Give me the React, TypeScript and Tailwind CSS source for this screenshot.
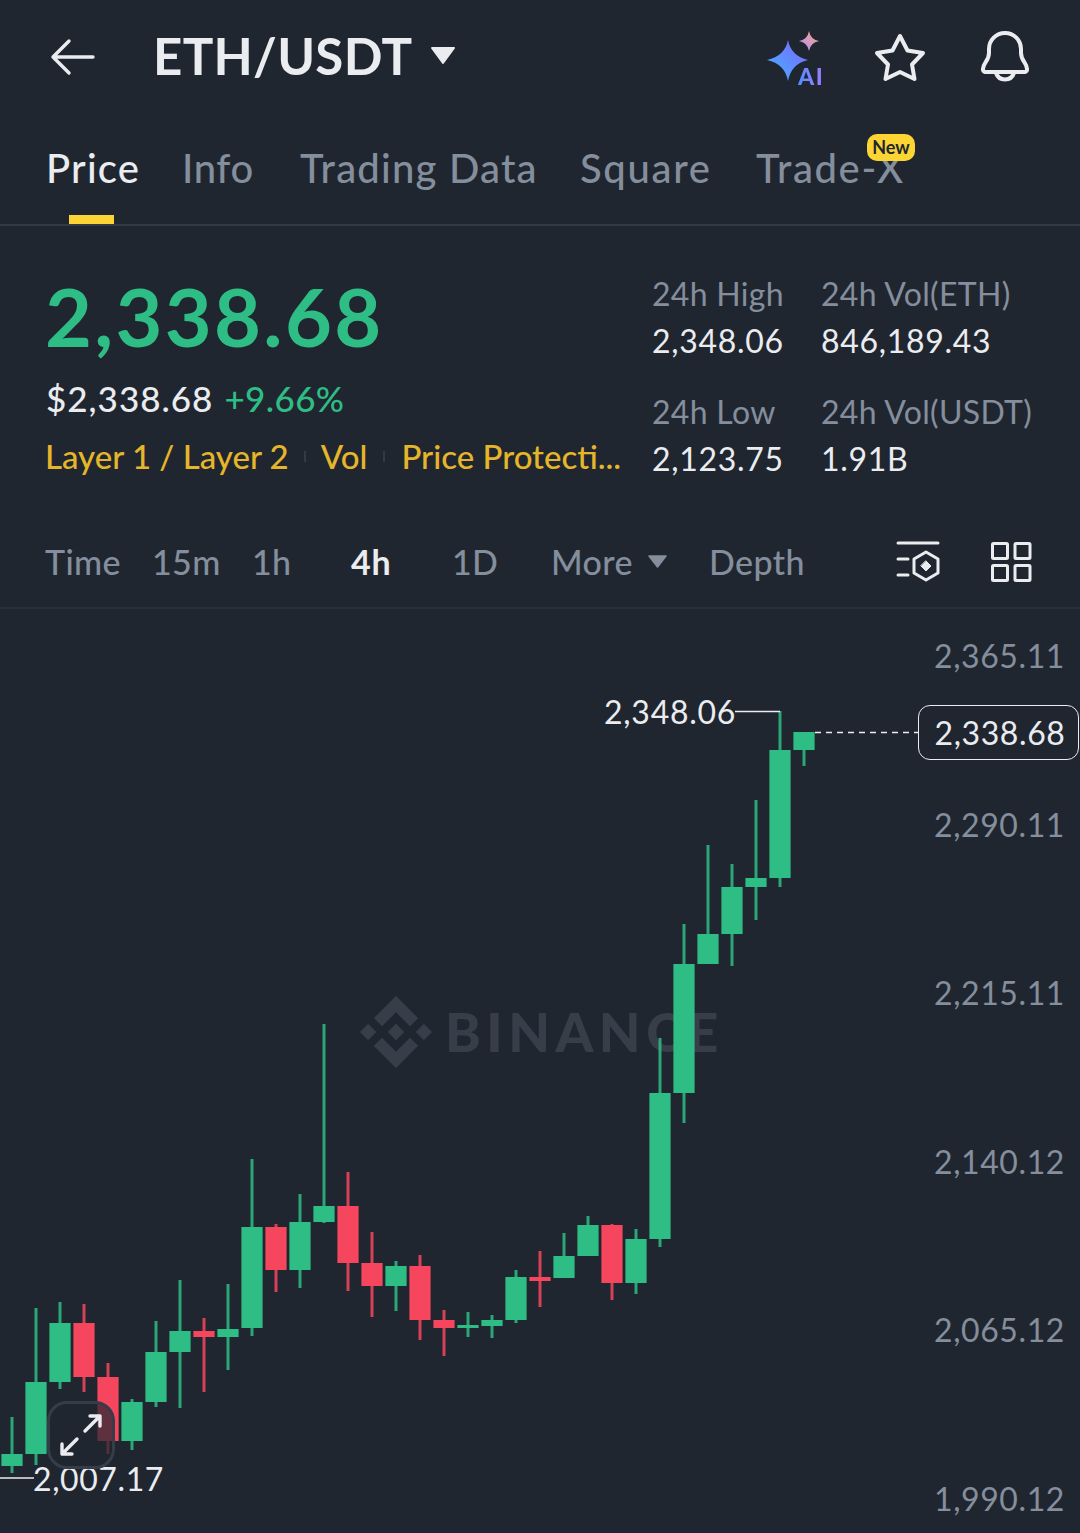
import React from "react"

const UP = "#2EBD85"
const DOWN = "#F6465D"

// x, wick top, wick bottom, body top, body bottom, colour
const candles: [number, number, number, number, number, string][] = [
  [12, 1417, 1473, 1454, 1466, UP],
  [36, 1308, 1465, 1382, 1454, UP],
  [60, 1302, 1389, 1323, 1382, UP],
  [84, 1304, 1392, 1323, 1377, DOWN],
  [108, 1363, 1454, 1377, 1441, DOWN],
  [132, 1399, 1450, 1402, 1441, UP],
  [156, 1321, 1407, 1352, 1402, UP],
  [180, 1280, 1408, 1331, 1352, UP],
  [204, 1318, 1392, 1331, 1337, DOWN],
  [228, 1284, 1370, 1329, 1337, UP],
  [252, 1159, 1336, 1227, 1328, UP],
  [276, 1224, 1292, 1227, 1270, DOWN],
  [300, 1194, 1288, 1222, 1270, UP],
  [324, 1024, 1223, 1206, 1222, UP],
  [348, 1172, 1291, 1206, 1263, DOWN],
  [372, 1232, 1317, 1263, 1286, DOWN],
  [396, 1261, 1311, 1266, 1286, UP],
  [420, 1255, 1340, 1266, 1320, DOWN],
  [444, 1310, 1356, 1320, 1328, DOWN],
  [468, 1312, 1337, 1325, 1328, UP],
  [492, 1315, 1338, 1320, 1326, UP],
  [516, 1270, 1323, 1277, 1320, UP],
  [540, 1251, 1307, 1277, 1281, DOWN],
  [564, 1233, 1278, 1256, 1278, UP],
  [588, 1216, 1256, 1225, 1256, UP],
  [612, 1224, 1300, 1225, 1283, DOWN],
  [636, 1229, 1294, 1239, 1283, UP],
  [660, 1038, 1247, 1093, 1239, UP],
  [684, 924, 1123, 964, 1093, UP],
  [708, 845, 964, 934, 964, UP],
  [732, 864, 966, 887, 934, UP],
  [756, 800, 920, 878, 887, UP],
  [780, 711, 887, 750, 878, UP],
  [804, 732, 766, 732, 750, UP],
]

const axis = ["2,365.11", "2,290.11", "2,215.11", "2,140.12", "2,065.12", "1,990.12"]

const AiIcon = () => (
  <div className="relative w-[60px] h-[56px]">
    <svg width="60" height="56" viewBox="765 28 60 56">
      <defs>
        <linearGradient id="big" x1="0" y1="1" x2="1" y2="0">
          <stop offset="0" stopColor="#45B4FF" />
          <stop offset="1" stopColor="#7B63FF" />
        </linearGradient>
        <linearGradient id="small" x1="0" y1="1" x2="1" y2="0">
          <stop offset="0" stopColor="#B98CFF" />
          <stop offset="1" stopColor="#F5A87F" />
        </linearGradient>
      </defs>
      <path d="M788 39 Q791 55 808 59 Q791 63 788 80 Q785 63 767 59 Q785 55 788 39Z" fill="url(#big)" />
      <path d="M809 30 Q810.5 38.5 819 40 Q810.5 41.5 809 50 Q807.5 41.5 799 40 Q807.5 38.5 809 30Z" fill="url(#small)" />
    </svg>
    <span className="absolute left-[33px] top-[36px] text-[23px] leading-[23px] font-black tracking-[1.5px] bg-gradient-to-r from-[#4F8DFF] to-[#9C7BFF] bg-clip-text text-transparent">AI</span>
  </div>
)

const Header = () => (
  <div className="h-[114px] flex items-center relative">
    <svg className="ml-[50px]" width="48" height="38" viewBox="50 37 48 38" fill="none" stroke="#EAECEF" strokeWidth="3.4" strokeLinecap="round" strokeLinejoin="round">
      <path d="M93 56H53M69 40L53 56L69 72" />
    </svg>
    <h1 className="ml-[55px] -mt-[2px] text-[51px] leading-[60px] font-bold text-[#EAECEF] tracking-[0.3px]">ETH/USDT</h1>
    <svg className="ml-[17px] -mt-[2px]" width="28" height="20" viewBox="0 0 28 20">
      <path d="M3 2H25L14 17Z" fill="#EAECEF" stroke="#EAECEF" strokeWidth="2" strokeLinejoin="round" />
    </svg>
    <div className="ml-auto mr-[49px] flex items-center">
      <AiIcon />
      <svg className="ml-[47px]" width="56" height="56" viewBox="872 28 56 56" fill="none" stroke="#EAECEF" strokeWidth="4" strokeLinejoin="round">
        <path d="M900 35L907.5 49.5L923 52L912 63.5L914.5 78L900 71L885.5 78L888 63.5L877 52L892.5 49.5Z" />
      </svg>
      <svg className="ml-[51px]" width="52" height="56" viewBox="979 28 52 56" fill="none" stroke="#EAECEF" strokeWidth="4" strokeLinejoin="round" strokeLinecap="round">
        <path d="M989 52V48A16 16 0 0 1 1021 48V52C1021 60 1027 62 1027 68A2.5 2.5 0 0 1 1025 71H985A2.5 2.5 0 0 1 983 68C983 62 989 60 989 52Z" />
        <path d="M996 72A9.5 9.5 0 0 0 1014 72" />
      </svg>
    </div>
  </div>
)

const Tabs = () => (
  <div className="h-[110px] border-b-2 border-[#333A46] box-content flex text-[40px] leading-[48px] font-medium tracking-[1.2px] text-[#848E9C] pl-[46px]">
    <div className="relative w-[136px] pt-[30px] text-[#EAECEF]">
      Price
      <span className="absolute left-[23px] bottom-0 w-[45px] h-[9px] bg-[#FCD535]" />
    </div>
    <div className="w-[118px] pt-[30px] tracking-[0.6px]">Info</div>
    <div className="w-[280px] pt-[30px]">Trading Data</div>
    <div className="w-[176px] pt-[30px] tracking-[1.7px]">Square</div>
    <div className="relative pt-[30px] tracking-[1.6px]">
      Trade-X
      <span className="absolute left-[111px] top-[20px] h-[27px] w-[48px] rounded-[10px] bg-[#FCD535] text-[#202630] text-[18px] leading-[27px] font-bold tracking-[0px] text-center">New</span>
    </div>
  </div>
)

const Stat = ({ label, value }: { label: string; value: string }) => (
  <div>
    <div className="text-[32px] leading-[40px] tracking-[0.3px] text-[#848E9C]">{label}</div>
    <div className="mt-[7px] text-[32px] leading-[40px] tracking-[0.7px] text-[#EAECEF]">{value}</div>
  </div>
)

const Stats = () => (
  <div className="h-[294px] flex">
    <div className="w-[652px] pl-[45px]">
      <div className="mt-[44px] text-[81px] leading-[92px] font-bold tracking-[2.3px] text-[#2EBD85]">2,338.68</div>
      <div className="mt-[14px] flex text-[35px] leading-[44px] font-medium">
        <span className="ml-[1px] tracking-[1px] text-[#EAECEF]">$2,338.68</span>
        <span className="ml-[11px] tracking-[0.4px] text-[#2EBD85]">+9.66%</span>
      </div>
      <div className="mt-[16px] flex items-center text-[33px] leading-[40px] font-medium text-[#E5B52A]">
        <span className="ml-[0px]">Layer 1 / Layer 2</span>
        <span className="ml-[15px] w-[2px] h-[11px] bg-[#333A46]" />
        <span className="ml-[15px]">Vol</span>
        <span className="ml-[16px] w-[2px] h-[11px] bg-[#333A46]" />
        <span className="ml-[16px] whitespace-nowrap">Price Protecti...</span>
      </div>
    </div>
    <div className="pt-[48px] grid grid-cols-[169px_auto] gap-y-[31px] content-start">
      <Stat label="24h High" value="2,348.06" />
      <Stat label="24h Vol(ETH)" value="846,189.43" />
      <Stat label="24h Low" value="2,123.75" />
      <Stat label="24h Vol(USDT)" value="1.91B" />
    </div>
  </div>
)

const TimeRow = () => (
  <div className="h-[84px] pb-[3px] border-b-2 border-[#2A303B] box-content flex items-center pl-[45px] text-[34px] leading-[40px] font-medium tracking-[0.4px] text-[#848E9C]">
    <div className="w-[107px]">Time</div>
    <div className="w-[100px]">15m</div>
    <div className="w-[98px]">1h</div>
    <div className="w-[102px] pl-[1px] text-[#EAECEF] font-bold tracking-[0.8px]">4h</div>
    <div className="w-[99px]">1D</div>
    <div className="w-[158px] flex items-center">
      More
      <svg className="ml-[14px]" width="21" height="14" viewBox="0 0 21 14">
        <path d="M2 1H19L10.5 12Z" fill="#848E9C" stroke="#848E9C" strokeWidth="1.5" strokeLinejoin="round" />
      </svg>
    </div>
    <div>Depth</div>
    <div className="ml-auto mr-[48px] flex items-center gap-[50px]">
      <svg width="44" height="44" viewBox="896 543 44 44" fill="none" stroke="#EAECEF" strokeWidth="3" strokeLinecap="round" strokeLinejoin="round">
        <path d="M898 546H938M898 562H908M898 578H908" />
        <path d="M926 555L938 562V576L926 583L914 576V562Z" />
        <path d="M926 564L931 569L926 574L921 569Z" fill="#EAECEF" strokeWidth="1" />
      </svg>
      <svg width="42" height="42" viewBox="990 541 42 42" fill="none" stroke="#EAECEF" strokeWidth="3" strokeLinejoin="round">
        <rect x="992.5" y="543.5" width="15" height="15" rx="1" />
        <rect x="1015" y="543.5" width="15" height="15" rx="1" />
        <rect x="992.5" y="565.5" width="15" height="15" rx="1" />
        <rect x="1015" y="565.5" width="15" height="15" rx="1" />
      </svg>
    </div>
  </div>
)

const Chart = () => (
  <div className="relative h-[924px] overflow-hidden">
    {/* watermark sits under the candles */}
    <div className="absolute left-[360px] top-[387px] flex items-center">
      <svg width="72" height="72" viewBox="0 0 126.61 126.61" fill="#383E49">
        <path d="M38.73 53.2l24.59-24.58 24.6 24.6 14.3-14.31L63.32 0 24.43 38.9l14.3 14.3zM0 63.31l14.3-14.31 14.31 14.31-14.31 14.3zM38.73 73.41l24.59 24.59 24.6-24.6 14.31 14.29-38.9 38.91-38.91-38.88-.02-.02zM98 63.31l14.3-14.31 14.31 14.3-14.31 14.32zM77.83 63.3L63.32 48.78 52.59 59.51l-1.24 1.23-2.54 2.54 14.51 14.5 14.51-14.47z" />
      </svg>
      <span className="ml-[13px] text-[54px] leading-[60px] font-black tracking-[5.5px] text-[#383E49]">BINANCE</span>
    </div>

    <svg className="absolute inset-0" width="1080" height="924" viewBox="0 609 1080 924">
      {candles.map(([x, wt, wb, bt, bb, c]) => (
        <g key={x} fill={c}>
          <rect x={x - 1.5} y={wt} width="3" height={wb - wt} opacity="0.85" />
          <rect x={x - 10.6} y={bt} width="21.2" height={bb - bt} />
        </g>
      ))}
      <path d="M735 711.5H780" stroke="#EAECEF" strokeWidth="1.3" />
      <path d="M815 732.5H918" stroke="#EAECEF" strokeWidth="1.3" strokeDasharray="6 5" />
      <path d="M0 1478H34" stroke="#EAECEF" strokeWidth="1.3" />
    </svg>

    <div className="absolute right-[15px] top-[31px] flex flex-col gap-[136.5px] items-end text-[32px] leading-[32px] tracking-[0.6px] text-[#848E9C]">
      {axis.map((v) => (
        <div key={v}>{v}</div>
      ))}
    </div>

    <div className="absolute left-[604px] top-[87px] text-[32px] leading-[32px] tracking-[0.75px] text-[#EAECEF]">2,348.06</div>
    <div className="absolute left-[33px] top-[854px] text-[32px] leading-[32px] tracking-[0.6px] text-[#EAECEF]">2,007.17</div>

    <div className="absolute left-[918px] top-[96px] w-[161px] h-[55px] rounded-[12px] border-[1.5px] border-[#EAECEF] bg-[#202630] flex items-center justify-center pl-[3px] text-[32px] leading-[32px] tracking-[0.6px] text-[#EAECEF]">
      2,338.68
    </div>

    <div className="absolute left-[47px] top-[792px] w-[68px] h-[68px] rounded-[20px] border-[3px] border-[#363C48] bg-[#202630]/70 flex items-center justify-center">
      <svg width="48" height="48" viewBox="57 1411 48 48" fill="none" stroke="#EAECEF" strokeWidth="3.4" strokeLinecap="round" strokeLinejoin="round">
        <path d="M85 1431L100 1416M90 1416H100V1426" />
        <path d="M77 1439L62 1454M72 1454H62V1444" />
      </svg>
    </div>
  </div>
)

export default function App() {
  return (
    <div className="w-[1080px] h-[1533px] overflow-hidden bg-[#202630] font-['Lato',sans-serif]">
      <Header />
      <Tabs />
      <Stats />
      <TimeRow />
      <Chart />
    </div>
  )
}
